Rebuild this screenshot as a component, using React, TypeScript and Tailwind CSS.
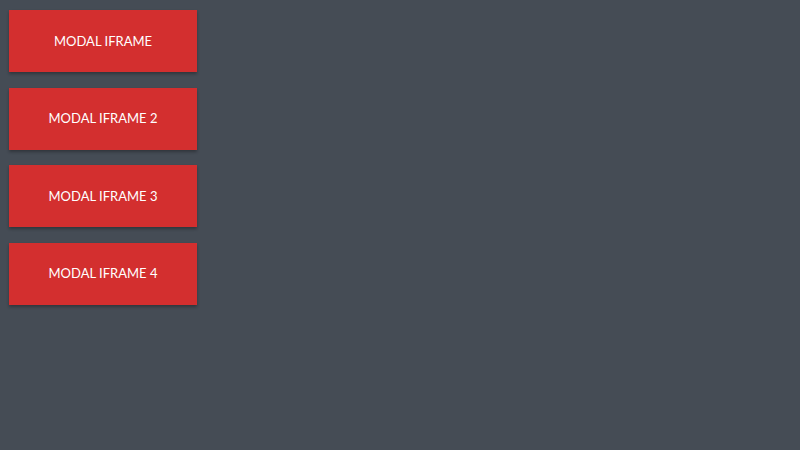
import React from 'react';

const labels = ['Modal iframe', 'Modal iframe 2', 'Modal iframe 3', 'Modal iframe 4'];

const App: React.FC = () => {
  return (
    <div className="min-h-screen w-full bg-[#454c55] pl-[9px] pt-[10px]" style={{ fontFamily: 'Lato, "Open Sans", sans-serif' }}>
      <div className="flex flex-col gap-[15.5px]">
        {labels.map((label) => (
          <button
            key={label}
            className="w-[188px] h-[62px] pt-px bg-[#d32f2f] text-white text-[13px] uppercase shadow-[0_2px_3px_rgba(0,0,0,0.3)]"
          >
            {label}
          </button>
        ))}
      </div>
    </div>
  );
};

export default App;
